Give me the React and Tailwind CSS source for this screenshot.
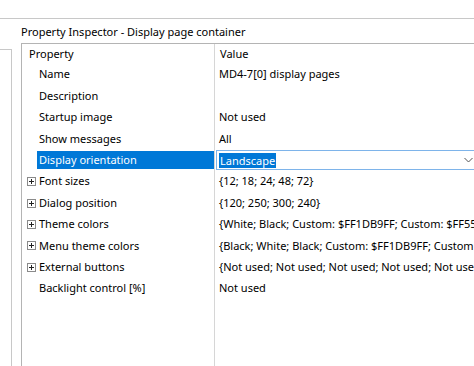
import React from "react";

const rows = [
  { name: "Name", value: "MD4-7[0] display pages" },
  { name: "Description", value: "" },
  { name: "Startup image", value: "Not used" },
  { name: "Show messages", value: "All" },
  { name: "Display orientation", value: "Landscape", selected: true },
  { name: "Font sizes", value: "{12; 18; 24; 48; 72}", expand: true },
  { name: "Dialog position", value: "{120; 250; 300; 240}", expand: true },
  { name: "Theme colors", value: "{White; Black; Custom: $FF1DB9FF; Custom: $FF55FF55}", expand: true },
  { name: "Menu theme colors", value: "{Black; White; Black; Custom: $FF1DB9FF; Custom: $FF55}", expand: true },
  { name: "External buttons", value: "{Not used; Not used; Not used; Not used; Not used; Not used}", expand: true },
  { name: "Backlight control [%]", value: "Not used" },
];

function PlusBox() {
  return (
    <svg width="9" height="9" viewBox="0 0 9 9" className="shrink-0">
      <rect x="0.5" y="0.5" width="8" height="8" fill="#fff" stroke="#8a8a8a" />
      <path d="M2 4.5h5M4.5 2v5" stroke="#222" strokeWidth="1" />
    </svg>
  );
}

export default function App() {
  return (
    <div
      className="w-[474px] h-[366px] bg-white overflow-hidden text-[11px] text-black"
      style={{ fontFamily: '"Noto Sans", "Liberation Sans", sans-serif' }}
    >
      <div className="h-[19px] border-b border-[#c8c8c8]" />
      <div className="flex h-[347px]">
        {/* left panel */}
        <div className="w-[21px] shrink-0 pt-[30px]">
          <div className="w-[12px] h-full border-t border-r border-[#c8c8c8]" />
        </div>

        {/* inspector */}
        <div className="flex-1 flex flex-col min-w-0">
          <div className="h-[24px] flex items-center whitespace-nowrap leading-none pt-[1px]">
            Property Inspector - Display page container
          </div>
          <div className="flex-1 border-t border-l border-[#b4b4b4] flex flex-col">
            <div className="flex h-[20px] items-center whitespace-nowrap">
              <div className="w-[192px] shrink-0 pl-[7px]">Property</div>
              <div className="h-full border-l border-[#d6d6d6]" />
              <div className="pl-[5px]">Value</div>
            </div>
            <div className="flex-1 flex">
              <div className="w-[192px] shrink-0 flex flex-col">
                {rows.map((r) => (
                  <div key={r.name} className="h-[21.4px] flex items-center whitespace-nowrap">
                    <div className="w-[16px] shrink-0 flex justify-end pr-[2px]">
                      {r.expand && <PlusBox />}
                    </div>
                    {r.selected ? (
                      <div className="flex-1 h-[18px] bg-[#0078d7] text-white flex items-center pl-[2px] -ml-[1px]">
                        {r.name}
                      </div>
                    ) : (
                      <div className="pl-[1px]">{r.name}</div>
                    )}
                  </div>
                ))}
              </div>
              <div className="border-l border-[#d6d6d6]" />
              <div className="flex-1 flex flex-col min-w-0">
                {rows.map((r) => (
                  <div key={r.name} className="h-[21.4px] flex items-center whitespace-nowrap overflow-hidden">
                    {r.selected ? (
                      <div className="flex-1 h-[20px] ml-[1px] border-y border-l border-[#7eb4ea] flex items-center pl-[2px] pr-[1px]">
                        <span className="bg-[#0078d7] text-white px-[1px] leading-[15px]">Landscape</span>
                        <svg width="9" height="6" viewBox="0 0 9 6" className="ml-auto">
                          <path d="M0.5 1l4 4 4-4" fill="none" stroke="#555" strokeWidth="1" />
                        </svg>
                      </div>
                    ) : (
                      <div className="pl-[4px]">{r.value}</div>
                    )}
                  </div>
                ))}
              </div>
            </div>
          </div>
        </div>
      </div>
    </div>
  );
}
